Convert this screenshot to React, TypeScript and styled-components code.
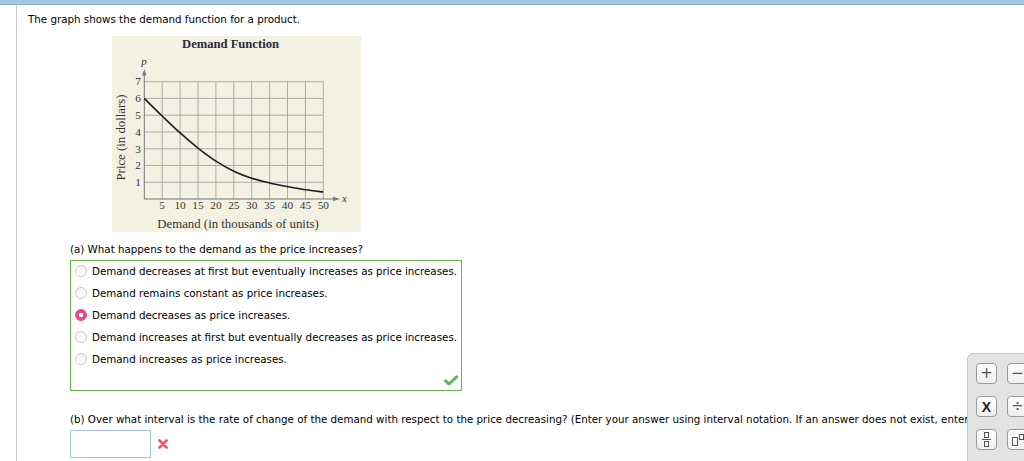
import React from "react";
import styled, { createGlobalStyle } from "styled-components";

const GlobalStyle = createGlobalStyle`
  html, body { margin: 0; padding: 0; background: #fff; }
  body {
    font-family: "DejaVu Sans", Verdana, sans-serif;
    color: #000;
    overflow: hidden;
    width: 1024px;
    height: 461px;
  }
`;

const Page = styled.div`
  position: relative;
  width: 1024px;
  height: 461px;
  overflow: hidden;
  display: flex;
  flex-direction: column;
`;

const TopBar = styled.div`
  height: 4px;
  background: #a3c5e2;
  border-bottom: 1px solid #8eb0cd;
  flex: none;
`;

const Body = styled.div`
  display: flex;
  flex: 1;
`;

const Gutter = styled.div`
  width: 16px;
  border-right: 1px solid #c9c9c9;
  flex: none;
`;

const Content = styled.div`
  padding: 8px 0 0 11px;
  font-size: 10.3px;
  line-height: 12px;
  white-space: nowrap;
`;

const Intro = styled.div`
  margin: 0;
`;

const Figure = styled.div`
  margin: 11px 0 0 84px;
  width: 249px;
  height: 196px;
  background: #f3f1e2;
`;

const Question = styled.div<{ $mt: number }>`
  margin-top: ${(p) => p.$mt}px;
  margin-left: 42px;
`;

const OptionsBox = styled.div`
  margin: 5px 0 0 42px;
  width: 392px;
  height: 131px;
  border: 1px solid #6fb14f;
  position: relative;
  padding-top: 0;
  box-sizing: border-box;
  display: flex;
  flex-direction: column;
`;

const OptionRow = styled.div`
  height: 22px;
  display: flex;
  align-items: center;
  gap: 5px;
  padding-left: 4px;
  &:first-child { margin-top: -1px; }
`;

const Radio = styled.span<{ $checked?: boolean }>`
  width: 12px;
  height: 12px;
  border-radius: 50%;
  box-sizing: border-box;
  flex: none;
  border: 1px solid ${(p) => (p.$checked ? "#e8458d" : "#c8c8c8")};
  background: ${(p) =>
    p.$checked
      ? "radial-gradient(circle, #fff 0 2px, #e8458d 2.6px)"
      : "linear-gradient(#f2f2f2, #fff)"};
`;

const Check = styled.svg`
  position: absolute;
  right: 3px;
  bottom: 4px;
`;

const AnswerRow = styled.div`
  margin: 5px 0 0 42px;
  display: flex;
  align-items: center;
  gap: 7px;
`;

const AnswerInput = styled.div`
  width: 81px;
  height: 28px;
  box-sizing: border-box;
  border: 1px solid #a6c4e3;
  background: #fff;
`;

const Palette = styled.div`
  position: absolute;
  left: 967px;
  top: 353px;
  width: 80px;
  height: 120px;
  background: #e3e3e3;
  border: 1px solid #c6c6c6;
  border-radius: 6px 0 0 0;
  box-sizing: border-box;
  display: grid;
  grid-template-columns: 21px 21px;
  grid-auto-rows: 21px;
  column-gap: 10px;
  row-gap: 12px;
  padding: 9px 0 0 8px;
`;

const Key = styled.div`
  box-sizing: border-box;
  border: 1px solid #9a9a9a;
  border-radius: 4px;
  background: linear-gradient(#fdfdfd, #efefef);
  display: flex;
  align-items: center;
  justify-content: center;
  color: #555;
  font-size: 15px;
  line-height: 1;
`;

const Xkey = styled.span`
  font-family: "Liberation Sans", Arial, sans-serif;
  font-weight: bold;
  font-size: 14px;
  color: #222;
`;

const pts: [number, number][] = [
  [0, 6], [5, 4.95], [10, 3.94], [15, 3.04], [20, 2.26], [25, 1.66],
  [30, 1.24], [35, 0.96], [40, 0.74], [45, 0.55], [50, 0.42],
];
const X0 = 32.3, Y0 = 163, SX = 3.58, SY = 16.76;
const toPx = ([x, y]: [number, number]) => [X0 + x * SX, Y0 - y * SY];

function curvePath() {
  const p = pts.map(toPx);
  let d = `M${p[0][0].toFixed(2)},${p[0][1].toFixed(2)}`;
  for (let i = 0; i < p.length - 1; i++) {
    const p0 = p[i - 1] || p[i];
    const p1 = p[i];
    const p2 = p[i + 1];
    const p3 = p[i + 2] || p2;
    const c1x = p1[0] + (p2[0] - p0[0]) / 6;
    const c1y = p1[1] + (p2[1] - p0[1]) / 6;
    const c2x = p2[0] - (p3[0] - p1[0]) / 6;
    const c2y = p2[1] - (p3[1] - p1[1]) / 6;
    d += ` C${c1x.toFixed(2)},${c1y.toFixed(2)} ${c2x.toFixed(2)},${c2y.toFixed(2)} ${p2[0].toFixed(2)},${p2[1].toFixed(2)}`;
  }
  return d;
}

function DemandChart() {
  const serif = "'Liberation Serif', 'Times New Roman', serif";
  const vx = Array.from({ length: 11 }, (_, i) => X0 + i * 5 * SX);
  const hy = Array.from({ length: 8 }, (_, i) => Y0 - i * SY);
  return (
    <svg width="249" height="196" viewBox="0 0 249 196">
      <text x="118.5" y="12" textAnchor="middle" fontFamily={serif} fontWeight="bold" fontSize="12.6" fill="#2a2a3a">
        Demand Function
      </text>
      <text x="32" y="29" textAnchor="middle" fontFamily={serif} fontStyle="italic" fontSize="11" fill="#333">p</text>
      {vx.slice(1).map((x, i) => (
        <line key={"v" + i} x1={x} y1={hy[7]} x2={x} y2={Y0} stroke="#a4a4a4" strokeWidth="0.9" />
      ))}
      {hy.slice(1).map((y, i) => (
        <line key={"h" + i} x1={X0} y1={y} x2={vx[10]} y2={y} stroke="#a4a4a4" strokeWidth="0.9" />
      ))}
      <line x1={X0} y1={Y0} x2={X0} y2={36} stroke="#777" strokeWidth="1" />
      <path d={`M${X0 - 2.2},39.5 L${X0},33 L${X0 + 2.2},39.5 Z`} fill="#777" />
      <line x1={X0} y1={Y0} x2={224} y2={Y0} stroke="#777" strokeWidth="1" />
      <path d={`M221,${Y0 - 2.2} L228,${Y0} L221,${Y0 + 2.2} Z`} fill="#777" />
      <text x="230" y="166" fontFamily={serif} fontStyle="italic" fontSize="11" fill="#333">x</text>
      {hy.slice(1).map((y, i) => (
        <text key={"yl" + i} x="29" y={y + 3.8} textAnchor="end" fontFamily={serif} fontSize="11.3" fill="#333">
          {i + 1}
        </text>
      ))}
      {vx.slice(1).map((x, i) => (
        <text key={"xl" + i} x={x} y="173" textAnchor="middle" fontFamily={serif} fontSize="11.3" fill="#333">
          {(i + 1) * 5}
        </text>
      ))}
      <text x="126" y="192" textAnchor="middle" fontFamily={serif} fontSize="12.8" fill="#333">
        Demand (in thousands of units)
      </text>
      <text
        transform="translate(12.5 101.5) rotate(-90)"
        textAnchor="middle"
        fontFamily={serif}
        fontSize="12.8"
        fill="#333"
      >
        Price (in dollars)
      </text>
      <path d={curvePath()} fill="none" stroke="#1e1e1e" strokeWidth="1.6" />
    </svg>
  );
}

const options = [
  "Demand decreases at first but eventually increases as price increases.",
  "Demand remains constant as price increases.",
  "Demand decreases as price increases.",
  "Demand increases at first but eventually decreases as price increases.",
  "Demand increases as price increases.",
];

export default function App() {
  return (
    <Page>
      <GlobalStyle />
      <TopBar />
      <Body>
        <Gutter />
        <Content>
          <Intro>The graph shows the demand function for a product.</Intro>
          <Figure>
            <DemandChart />
          </Figure>
          <Question $mt={11}>(a) What happens to the demand as the price increases?</Question>
          <OptionsBox>
            {options.map((o, i) => (
              <OptionRow key={i}>
                <Radio $checked={i === 2} />
                <span>{o}</span>
              </OptionRow>
            ))}
            <Check width="14" height="11" viewBox="0 0 14 11">
              <path d="M1.5 5.8 L5 9 L12.5 1.8" fill="none" stroke="#5cb85c" strokeWidth="3" strokeLinecap="round" strokeLinejoin="round" />
            </Check>
          </OptionsBox>
          <Question $mt={22}>
            (b) Over what interval is the rate of change of the demand with respect to the price decreasing? (Enter your answer using interval notation. If an answer does not exist, enter DNE.)
          </Question>
          <AnswerRow>
            <AnswerInput />
            <svg width="10" height="10" viewBox="0 0 10 10">
              <path d="M1.5 1.5 L8.5 8.5 M8.5 1.5 L1.5 8.5" stroke="#f0555d" strokeWidth="2.6" strokeLinecap="round" />
            </svg>
          </AnswerRow>
        </Content>
      </Body>
      <Palette>
        <Key>+</Key>
        <Key>−</Key>
        <Key><Xkey>X</Xkey></Key>
        <Key>÷</Key>
        <Key>
          <svg width="9" height="15" viewBox="0 0 9 15">
            <rect x="2.5" y="0.5" width="4" height="5" fill="none" stroke="#555" strokeWidth="1" />
            <line x1="0" y1="7.5" x2="9" y2="7.5" stroke="#555" strokeWidth="1" />
            <rect x="2.5" y="9.5" width="4" height="5" fill="none" stroke="#555" strokeWidth="1" />
          </svg>
        </Key>
        <Key>
          <svg width="14" height="14" viewBox="0 0 14 14">
            <rect x="1.5" y="4.5" width="5" height="8" fill="none" stroke="#555" strokeWidth="1" />
            <rect x="8.5" y="1.5" width="4" height="5" fill="none" stroke="#555" strokeWidth="1" />
          </svg>
        </Key>
      </Palette>
    </Page>
  );
}
